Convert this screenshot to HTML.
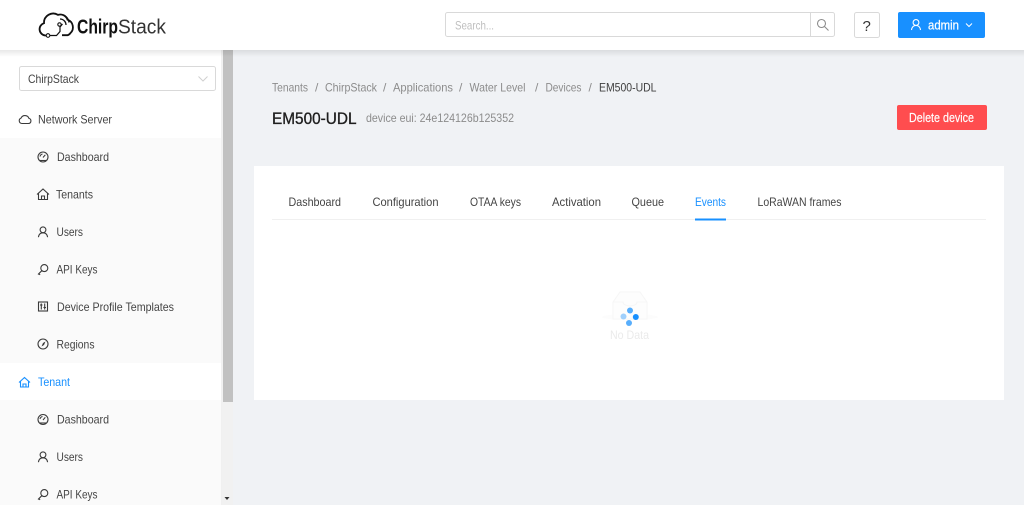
<!DOCTYPE html>
<html><head><meta charset="utf-8"><title>ChirpStack</title>
<style>
html,body{margin:0;padding:0;width:1024px;height:505px;overflow:hidden;background:#f0f2f5}
svg{display:block}
text{font-family:"Liberation Sans",sans-serif;font-size:12px;fill:#444}
.i{fill:none;stroke:#3a3a3a;stroke-width:1.1}
.g{fill:#8c8c8c}
</style></head><body>
<svg width="1024" height="505" viewBox="0 0 1024 505" xmlns="http://www.w3.org/2000/svg">
<defs><linearGradient id="sh" x1="0" y1="0" x2="0" y2="1"><stop offset="0" stop-color="#000" stop-opacity=".09"/><stop offset="1" stop-color="#000" stop-opacity="0"/></linearGradient>
<g id="dash"><circle cx="6" cy="6" r="5" class="i"/><path d="M6 6.5 8.300 3.800M3 5.500A3.200 3.200 0 0 1 5.500 3" class="i"/><path d="M3 9.500h6" class="i"/></g>
<g id="user"><circle cx="6" cy="3.800" r="2.900" class="i"/><path d="M1.400 11.200C1.800 8.200 3.600 6.800 6 6.800s4.200 1.400 4.600 4.400" class="i"/></g>
<g id="key"><circle cx="7.300" cy="4.600" r="3.500" class="i"/><path d="M4.800 7.200 1 11M1.800 10.200l1.300 1.100" class="i"/></g>
</defs>
<rect width="1024" height="505" fill="#f0f2f5"/>
<!-- sidebar -->
<rect x="0" y="50" width="221" height="455" fill="#fff"/>
<rect x="0" y="138" width="221" height="225" fill="#fafafa"/>
<rect x="0" y="400" width="221" height="105" fill="#fafafa"/>
<rect x="221" y="50" width="1" height="455" fill="#f0f0f0"/>
<rect x="222" y="50" width="11" height="455" fill="#f1f1f1"/>
<rect x="223" y="50" width="10" height="352" fill="#c1c1c1"/>
<path d="M224.500 497h5l-2.500 3z" fill="#333"/>
<rect x="19.500" y="66.500" width="196" height="24" rx="2" fill="#fff" stroke="#d9d9d9"/>
<text x="28" y="83" textLength="51" lengthAdjust="spacingAndGlyphs">ChirpStack</text>
<path d="M198.500 76.500l4.500 4.500 4.500-4.500" fill="none" stroke="#d0d0d0"/>
<path d="M22 123.500h6.500a2.600 2.600 0 0 0 .5-5.100 4.300 4.300 0 0 0-8-.300 2.800 2.800 0 0 0 1 5.400z" class="i"/>
<text x="38" y="123.500" textLength="74" lengthAdjust="spacingAndGlyphs">Network Server</text>

<use href="#dash" x="37" y="151"/>
<text x="57" y="161" textLength="52" lengthAdjust="spacingAndGlyphs">Dashboard</text>
<path d="M37 194.500 43 189l6 5.500M38.500 193.500v6h9v-6M41.500 199.500v-3.500h3v3.500" class="i"/>
<text x="56" y="198.500" textLength="37" lengthAdjust="spacingAndGlyphs">Tenants</text>
<use href="#user" x="37" y="226"/>
<text x="56.500" y="236" textLength="26.500" lengthAdjust="spacingAndGlyphs">Users</text>
<use href="#key" x="37" y="263.500"/>
<text x="56.500" y="273.500" textLength="41" lengthAdjust="spacingAndGlyphs">API Keys</text>
<rect x="38.500" y="302" width="9" height="9" class="i"/>
<path d="M41.300 303.500v6M44.700 303.500v6M40 305h2.500M43.500 307.500H46" class="i"/>
<text x="57" y="311" textLength="117" lengthAdjust="spacingAndGlyphs">Device Profile Templates</text>
<circle cx="43" cy="344" r="5" class="i"/><path d="M45.500 341.500 44 345l-2.500 1.500L43 343z" fill="#3a3a3a"/>
<text x="56.500" y="348.500" textLength="38" lengthAdjust="spacingAndGlyphs">Regions</text>

<path d="M19 382.500 24.500 377.500l5.500 5M20.500 381.500v5.500h8v-5.500M23 387v-3h3v3" fill="none" stroke="#1890ff" stroke-width="1.100"/>
<text x="38" y="386" textLength="32" lengthAdjust="spacingAndGlyphs" style="fill:#1890ff">Tenant</text>
<use href="#dash" x="37" y="413.500"/>
<text x="57" y="423.500" textLength="52" lengthAdjust="spacingAndGlyphs">Dashboard</text>
<use href="#user" x="37" y="451"/>
<text x="56.500" y="461" textLength="26.500" lengthAdjust="spacingAndGlyphs">Users</text>
<use href="#key" x="37" y="488.500"/>
<text x="56.500" y="498.500" textLength="41" lengthAdjust="spacingAndGlyphs">API Keys</text>

<!-- header -->
<rect x="0" y="50" width="1024" height="7" fill="url(#sh)"/>
<rect width="1024" height="50" fill="#fff"/>
<path d="M46 35.500h-.500a6.300 6.300 0 0 1-1.500-12.300 9.200 9.200 0 0 1 14-8.300 7.500 7.500 0 0 1 9.500 4.800 8 8 0 0 1 3 13.300 5 5 0 0 1-3 2.200H62" fill="none" stroke="#111" stroke-width="1.800"/>
<path d="M50 35.500h6.500l3.500-4V27l2.500-3" fill="none" stroke="#111" stroke-width="1.200"/>
<circle cx="48" cy="35.500" r="1.800" fill="#fff" stroke="#111" stroke-width="1.100"/>
<circle cx="59.500" cy="24.500" r="1.700" fill="#fff" stroke="#111" stroke-width="1.100"/>
<path d="M60 19a6 6 0 0 1 6 6M61.500 14.500a9 9 0 0 1 7.500 8" fill="none" stroke="#111" stroke-width="1.300"/>
<text x="77" y="33.500" textLength="41" lengthAdjust="spacingAndGlyphs" style="font-size:20px;fill:#111;font-weight:bold">Chirp</text>
<text x="118" y="33.500" textLength="48" lengthAdjust="spacingAndGlyphs" style="font-size:20px;fill:#333">Stack</text>

<rect x="445.500" y="12.500" width="389" height="24" rx="2" fill="#fff" stroke="#d9d9d9"/>
<path d="M810.500 13v23" stroke="#d9d9d9"/>
<text x="455" y="29.500" textLength="39" lengthAdjust="spacingAndGlyphs" style="fill:#bfbfbf">Search...</text>
<circle cx="821.500" cy="23.500" r="4" fill="none" stroke="#8c8c8c" stroke-width="1.100"/>
<path d="M824.500 26.500l4 4" stroke="#8c8c8c" stroke-width="1.100"/>
<rect x="854.500" y="12.500" width="25" height="25" rx="2" fill="#fff" stroke="#d9d9d9"/>
<text x="862.500" y="31" style="font-size:15px;fill:#333">?</text>
<rect x="898" y="12" width="87" height="26" rx="2" fill="#1890ff"/>
<circle cx="916" cy="22.500" r="2.900" fill="none" stroke="#fff" stroke-width="1.100"/>
<path d="M911.500 30c.4-3 2.200-4.500 4.500-4.500s4.100 1.500 4.500 4.500" fill="none" stroke="#fff" stroke-width="1.100"/>
<text x="928" y="29.500" textLength="31" lengthAdjust="spacingAndGlyphs" style="fill:#fff;font-size:12.500px;stroke:#fff;stroke-width:.2">admin</text>
<path d="M966 23.500l3 3 3-3" fill="none" stroke="#fff"/>

<!-- breadcrumb -->
<text class="g" x="272" y="91.500" textLength="36" lengthAdjust="spacingAndGlyphs">Tenants</text>
<text class="g" x="315" y="91.500">/</text>
<text class="g" x="325" y="91.500" textLength="52" lengthAdjust="spacingAndGlyphs">ChirpStack</text>
<text class="g" x="383" y="91.500">/</text>
<text class="g" x="393" y="91.500" textLength="60" lengthAdjust="spacingAndGlyphs">Applications</text>
<text class="g" x="459" y="91.500">/</text>
<text class="g" x="469.500" y="91.500" textLength="56" lengthAdjust="spacingAndGlyphs">Water Level</text>
<text class="g" x="535" y="91.500">/</text>
<text class="g" x="545.500" y="91.500" textLength="36" lengthAdjust="spacingAndGlyphs">Devices</text>
<text class="g" x="588.500" y="91.500">/</text>
<text x="599" y="91.500" textLength="57.500" lengthAdjust="spacingAndGlyphs" style="fill:#404040">EM500-UDL</text>
<text x="272" y="124" textLength="84.500" lengthAdjust="spacingAndGlyphs" style="font-size:16.500px;fill:#1f1f1f;stroke:#1f1f1f;stroke-width:.35">EM500-UDL</text>
<text class="g" x="366" y="122" textLength="148" lengthAdjust="spacingAndGlyphs">device eui: 24e124126b125352</text>
<rect x="897" y="105" width="90" height="25" rx="2" fill="#ff4d4f"/>
<text x="909" y="122" textLength="65" lengthAdjust="spacingAndGlyphs" style="fill:#fff;font-size:12.500px;stroke:#fff;stroke-width:.15">Delete device</text>

<!-- card -->
<rect x="254" y="166" width="750" height="234" fill="#fff"/>
<rect x="272" y="219" width="714" height="1" fill="#f0f0f0"/>
<rect x="695" y="218.500" width="31" height="2" fill="#1890ff"/>
<text x="288.500" y="206" textLength="52.500" lengthAdjust="spacingAndGlyphs">Dashboard</text>
<text x="372.500" y="206" textLength="66" lengthAdjust="spacingAndGlyphs">Configuration</text>
<text x="470" y="206" textLength="51" lengthAdjust="spacingAndGlyphs">OTAA keys</text>
<text x="552" y="206" textLength="49" lengthAdjust="spacingAndGlyphs">Activation</text>
<text x="631.500" y="206" textLength="32.500" lengthAdjust="spacingAndGlyphs">Queue</text>
<text x="695" y="206" textLength="31" lengthAdjust="spacingAndGlyphs" style="fill:#1890ff">Events</text>
<text x="757.500" y="206" textLength="84" lengthAdjust="spacingAndGlyphs">LoRaWAN frames</text>

<!-- empty + spinner -->
<g opacity=".5">
<ellipse cx="630" cy="317" rx="28" ry="3" fill="#fafafa"/>
<path d="M613 302l7-10h20l7 10v17h-34z" fill="#fcfcfc" stroke="#eeeeee"/>
<path d="M613 302h10a7 4 0 0 0 14 0h10" fill="none" stroke="#eeeeee"/>
<text x="610" y="339" textLength="39" lengthAdjust="spacingAndGlyphs" style="fill:#d6d6d6">No Data</text>
</g>
<circle cx="630" cy="310.500" r="3" fill="#58aefc"/>
<circle cx="635.800" cy="317" r="3" fill="#1890ff"/>
<circle cx="629" cy="323" r="3" fill="#58aefc"/>
<circle cx="623.500" cy="316.500" r="3" fill="#a0d0fc"/>
</svg>
</body></html>
